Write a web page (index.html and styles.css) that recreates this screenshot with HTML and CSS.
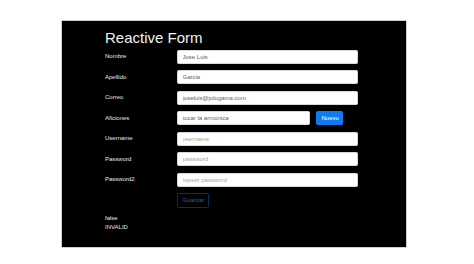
FILE: index.html
```html
<!DOCTYPE html>
<html lang="es">
<head>
<meta charset="utf-8">
<title>Reactive Form</title>
<link rel="stylesheet" href="styles.css">
</head>
<body>
<div class="panel">
  <h1 class="title">Reactive Form</h1>
  <form class="form">
    <div class="row">
      <label class="label">Nombre</label>
      <input class="control" type="text" value="Jose Luis">
    </div>
    <div class="row">
      <label class="label">Apellido</label>
      <input class="control" type="text" value="Garcia">
    </div>
    <div class="row">
      <label class="label">Correo</label>
      <input class="control" type="text" value="joseluis@jolugama.com">
    </div>
    <div class="row">
      <label class="label">Aficiones</label>
      <div class="inline">
        <input class="control short" type="text" value="tocar la armónica">
        <button class="btn primary" type="button">Nuevo</button>
      </div>
    </div>
    <div class="row">
      <label class="label">Username</label>
      <input class="control" type="text" placeholder="username">
    </div>
    <div class="row">
      <label class="label">Password</label>
      <input class="control" type="password" placeholder="password">
    </div>
    <div class="row">
      <label class="label">Password2</label>
      <input class="control" type="password" placeholder="repetir password">
    </div>
    <div class="row">
      <span class="label"></span>
      <div class="inline"><button class="btn outline" type="button">Guardar</button></div>
    </div>
  </form>
  <div class="status">
    <div>false</div>
    <div>INVALID</div>
  </div>
</div>
</body>
</html>
```

FILE: styles.css
```css
html, body {
  margin: 0;
  padding: 0;
  background: #ffffff;
}
body {
  font-family: "Liberation Sans", Arial, sans-serif;
}
.panel {
  box-sizing: border-box;
  margin: 20px 0 0 61px;
  width: 346px;
  height: 228px;
  background: #000000;
  border: 1px solid #cfcfcf;
  padding: 7.5px 0 0 43px;
}
.title {
  margin: 0 0 3px 0;
  font-size: 15px;
  line-height: 18px;
  font-weight: 400;
  color: #f2f2f2;
}
.form {
  margin: 0;
}
.row {
  display: grid;
  grid-template-columns: 72px 181px;
  align-items: center;
  margin-bottom: 6.5px;
}
.label {
  font-size: 6px;
  line-height: 9px;
  color: #e6e6e6;
}
.control {
  box-sizing: border-box;
  width: 181px;
  height: 14px;
  margin: 0;
  padding: 0 4.5px;
  font-family: "Liberation Sans", Arial, sans-serif;
  font-size: 6px;
  color: #5a5f64;
  background: #ffffff;
  border: 0.5px solid #d6d9dc;
  border-radius: 1.5px;
  outline: none;
}
.control::placeholder {
  color: #a0a4a8;
}
.control.short {
  width: 133px;
}
.inline {
  display: flex;
  align-items: center;
  gap: 6px;
}
.btn {
  box-sizing: border-box;
  height: 14.5px;
  margin: 0;
  padding: 0 4.5px;
  font-family: "Liberation Sans", Arial, sans-serif;
  font-size: 6px;
  line-height: 9px;
  border-radius: 1.5px;
  cursor: pointer;
}
.primary {
  width: 27px;
  height: 13.5px;
  background: #0b7cf2;
  border: 0.5px solid #0b7cf2;
  color: #ffffff;
}
.outline {
  width: 32px;
  background: #000000;
  border: 1px solid #0d2f5c;
  color: #2160b8;
}
.status {
  margin-top: 6px;
  font-size: 6px;
  line-height: 9px;
  color: #e6e6e6;
}
```
